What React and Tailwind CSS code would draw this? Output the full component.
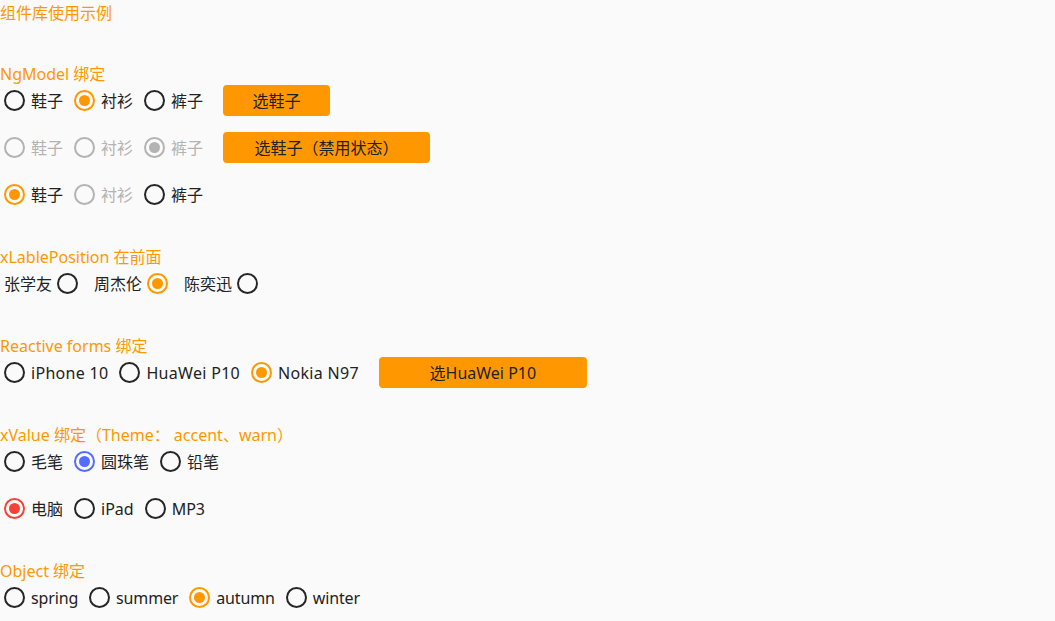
import React from "react";

const COLORS = {
  primary: { border: "border-[#ff9800]", dot: "bg-[#ff9800]" },
  accent: { border: "border-[#536dfe]", dot: "bg-[#536dfe]" },
  warn: { border: "border-[#f44336]", dot: "bg-[#f44336]" },
};

const TRACK = {
  none: "",
  wide: "tracking-[0.3px]",
  tight: "tracking-[-0.15px]",
};

function Circle({ checked, disabled, color = "primary" }) {
  let border = "border-[#262626]";
  let dot = "";
  if (disabled) {
    border = "border-[#b3b3b3]";
    dot = "bg-[#b3b3b3]";
  } else if (checked) {
    border = COLORS[color].border;
    dot = COLORS[color].dot;
  }
  return (
    <span
      className={`flex h-[21px] w-[21px] shrink-0 items-center justify-center rounded-full border-2 ${border}`}
    >
      {checked && <span className={`h-[11px] w-[11px] rounded-full ${dot}`} />}
    </span>
  );
}

function Radio({ label, checked, disabled, color, first, track = "none" }) {
  return (
    <span
      className={`inline-flex items-center ${first ? "ml-[4px]" : "ml-[11px]"}`}
    >
      <Circle checked={checked} disabled={disabled} color={color} />
      <span
        className={`ml-[6px] ${TRACK[track]} ${disabled ? "text-[#b3b3b3]" : "text-[#222222]"}`}
      >
        {label}
      </span>
    </span>
  );
}

function RadioBefore({ label, checked, first }) {
  return (
    <span className={`inline-flex items-center ${first ? "ml-[4px]" : "ml-[16px]"}`}>
      <span className="mr-[5px] text-[#222222]">{label}</span>
      <Circle checked={checked} />
    </span>
  );
}

function Btn({ children, w }) {
  return (
    <button
      className={`ml-[20px] flex h-[31px] items-center justify-center rounded-[4px] bg-[#ff9800] text-[16px] text-[#222222] ${w}`}
    >
      {children}
    </button>
  );
}

function Row({ children }) {
  return <div className="flex h-[31px] items-center">{children}</div>;
}

function Heading({ children }) {
  return <div className="h-[21px] leading-[21px] text-[#ff9800]">{children}</div>;
}

export default function App() {
  return (
    <div
      className="min-h-[621px] bg-[#fafafa] pt-[1px] text-[16px]"
      style={{ fontFamily: '"Noto Sans", "Noto Sans CJK SC", sans-serif' }}
    >
      <div className="h-[24px] leading-[24px] text-[#ff9800]">组件库使用示例</div>

      <div className="mt-[39px]">
        <Heading>NgModel 绑定</Heading>
        <div className="flex flex-col gap-[16px]">
          <Row>
            <Radio first label="鞋子" />
            <Radio label="衬衫" checked />
            <Radio label="裤子" />
            <Btn w="w-[107px]">选鞋子</Btn>
          </Row>
          <Row>
            <Radio first label="鞋子" disabled />
            <Radio label="衬衫" disabled />
            <Radio label="裤子" disabled checked />
            <Btn w="w-[207px]">选鞋子（禁用状态）</Btn>
          </Row>
          <Row>
            <Radio first label="鞋子" checked />
            <Radio label="衬衫" disabled />
            <Radio label="裤子" />
          </Row>
        </div>
      </div>

      <div className="mt-[37px]">
        <Heading>xLablePosition 在前面</Heading>
        <Row>
          <RadioBefore first label="张学友" />
          <RadioBefore label="周杰伦" checked />
          <RadioBefore label="陈奕迅" />
        </Row>
      </div>

      <div className="mt-[37px]">
        <Heading>Reactive forms 绑定</Heading>
        <Row>
          <Radio first label="iPhone 10" track="wide" />
          <Radio label="HuaWei P10" track="wide" />
          <Radio label="Nokia N97" checked track="wide" />
          <Btn w="w-[208px]">选HuaWei P10</Btn>
        </Row>
      </div>

      <div className="mt-[37px]">
        <Heading>xValue 绑定（Theme： accent、warn）</Heading>
        <div className="flex flex-col gap-[16px]">
          <Row>
            <Radio first label="毛笔" />
            <Radio label="圆珠笔" checked color="accent" />
            <Radio label="铅笔" />
          </Row>
          <Row>
            <Radio first label="电脑" checked color="warn" />
            <Radio label="iPad" />
            <Radio label="MP3" />
          </Row>
        </div>
      </div>

      <div className="mt-[37px]">
        <Heading>Object 绑定</Heading>
        <Row>
          <Radio first label="spring" track="tight" />
          <Radio label="summer" track="tight" />
          <Radio label="autumn" checked track="tight" />
          <Radio label="winter" track="tight" />
        </Row>
      </div>
    </div>
  );
}
